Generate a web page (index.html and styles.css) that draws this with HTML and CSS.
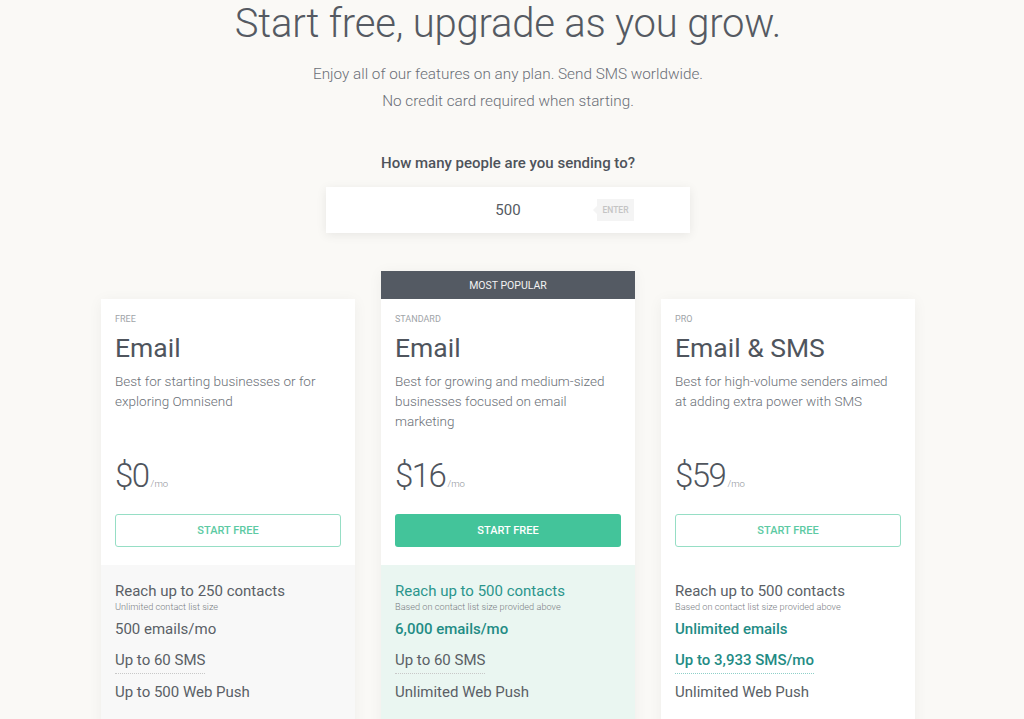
FILE: index.html
```html
<!DOCTYPE html>
<html lang="en">
<head>
  <meta charset="UTF-8">
  <title>Pricing</title>
  <link rel="stylesheet" href="styles.css">
</head>
<body>
  <div class="page">
    <h1 class="title">Start free, upgrade as you grow.</h1>
    <p class="subtitle">Enjoy all of our features on any plan. Send SMS worldwide.<br>No credit card required when starting.</p>

    <div class="contacts">
      <div class="contacts-label">How many people are you sending to?</div>
      <div class="contacts-input">
        <span class="contacts-value">500</span>
        <span class="enter-tag">ENTER</span>
      </div>
    </div>

    <div class="plans">
      <div class="plan">
        <div class="plan-top">
          <div class="plan-tier">FREE</div>
          <div class="plan-name">Email</div>
          <div class="plan-desc">Best for starting businesses or for exploring Omnisend</div>
          <div class="plan-price">$0<span class="per">/mo</span></div>
          <div class="btn btn-outline">START FREE</div>
        </div>
        <div class="plan-features grey">
          <div class="feature">Reach up to 250 contacts<div class="note">Unlimited contact list size</div></div>
          <div class="feature">500 emails/mo</div>
          <div class="feature"><span class="dotted">Up to 60 SMS</span></div>
          <div class="feature">Up to 500 Web Push</div>
        </div>
      </div>

      <div class="plan popular">
        <div class="popular-badge">MOST POPULAR</div>
        <div class="plan-top">
          <div class="plan-tier">STANDARD</div>
          <div class="plan-name">Email</div>
          <div class="plan-desc">Best for growing and medium-sized businesses focused on email marketing</div>
          <div class="plan-price">$16<span class="per">/mo</span></div>
          <div class="btn btn-filled">START FREE</div>
        </div>
        <div class="plan-features mint">
          <div class="feature teal">Reach up to 500 contacts<div class="note">Based on contact list size provided above</div></div>
          <div class="feature teal strong">6,000 emails/mo</div>
          <div class="feature"><span class="dotted">Up to 60 SMS</span></div>
          <div class="feature">Unlimited Web Push</div>
        </div>
      </div>

      <div class="plan">
        <div class="plan-top">
          <div class="plan-tier">PRO</div>
          <div class="plan-name">Email &amp; SMS</div>
          <div class="plan-desc">Best for high-volume senders aimed at adding extra power with SMS</div>
          <div class="plan-price">$59<span class="per">/mo</span></div>
          <div class="btn btn-outline">START FREE</div>
        </div>
        <div class="plan-features">
          <div class="feature">Reach up to 500 contacts<div class="note">Based on contact list size provided above</div></div>
          <div class="feature teal strong">Unlimited emails</div>
          <div class="feature teal strong"><span class="dotted dotted-teal">Up to 3,933 SMS/mo</span></div>
          <div class="feature">Unlimited Web Push</div>
        </div>
      </div>
    </div>
  </div>
</body>
</html>
```

FILE: styles.css
```css
body {
  margin: 0;
  padding: 0;
  background: #faf9f6;
  font-family: Roboto, "Liberation Sans", sans-serif;
  color: #555a62;
  overflow: hidden;
}
.page {
  width: 1016px;
  display: flex;
  flex-direction: column;
  align-items: center;
  padding-top: 2px;
}
.title {
  margin: 0;
  font-size: 40px;
  line-height: 44px;
  font-weight: 300;
  color: #555a62;
  letter-spacing: -0.2px;
}
.subtitle {
  margin: 15px 0 0;
  font-size: 15.3px;
  line-height: 27px;
  font-weight: 300;
  color: #6b6f76;
  text-align: center;
}
.contacts {
  margin-top: 38px;
  display: flex;
  flex-direction: column;
  align-items: center;
}
.contacts-label {
  font-size: 15px;
  line-height: 20px;
  font-weight: 500;
  color: #4e535b;
}
.contacts-input {
  margin-top: 14px;
  width: 364px;
  height: 46px;
  background: #fff;
  box-shadow: 0 2px 10px rgba(0, 0, 0, 0.08);
  display: flex;
  align-items: center;
  justify-content: center;
  position: relative;
}
.contacts-value {
  font-size: 15px;
  color: #555a62;
}
.enter-tag {
  position: absolute;
  left: 271px;
  top: 12px;
  width: 37px;
  height: 22px;
  background: #f4f4f4;
  color: #c4c4c4;
  font-size: 8.5px;
  font-weight: 500;
  display: flex;
  align-items: center;
  justify-content: center;
}
.enter-tag::before {
  content: "";
  position: absolute;
  left: -4px;
  top: 7px;
  border-top: 4px solid transparent;
  border-bottom: 4px solid transparent;
  border-right: 4px solid #f4f4f4;
}
.plans {
  margin-top: 38px;
  display: flex;
  gap: 26px;
  align-items: flex-start;
}
.plan {
  width: 254px;
  background: #fff;
  box-shadow: 0 2px 14px rgba(0, 0, 0, 0.05);
  margin-top: 28px;
}
.plan.popular {
  margin-top: 0;
}
.popular-badge {
  height: 28px;
  background: #545a63;
  color: #f2f2f2;
  font-size: 10.5px;
  font-weight: 400;
  display: flex;
  align-items: center;
  justify-content: center;
}
.plan-top {
  padding: 14px 14px 18px;
}
.plan-tier {
  font-size: 9px;
  line-height: 12px;
  color: #a0a4a8;
}
.plan-name {
  margin-top: 8px;
  font-size: 26.5px;
  line-height: 30px;
  color: #4f555d;
}
.plan-desc {
  margin-top: 8px;
  font-size: 13.5px;
  line-height: 20px;
  font-weight: 300;
  color: #6b7077;
  height: 60px;
}
.plan-price {
  margin-top: 25px;
  font-size: 33px;
  line-height: 40px;
  font-weight: 300;
  color: #4f555d;
  letter-spacing: -1.5px;
}
.per {
  font-size: 9.5px;
  line-height: 1;
  color: #8e9297;
  font-weight: 300;
  letter-spacing: 0;
  margin-left: 2px;
}
.btn {
  margin-top: 18px;
  height: 33px;
  box-sizing: border-box;
  border-radius: 3px;
  display: flex;
  align-items: center;
  justify-content: center;
  font-size: 11px;
  font-weight: 500;
}
.btn-outline {
  border: 1px solid #96dec5;
  color: #5ccaa3;
}
.btn-filled {
  background: #43c49a;
  color: #fff;
}
.plan-features {
  padding: 16px 14px 14px;
  height: 140px;
}
.plan-features.grey {
  background: #f8f8f8;
}
.plan-features.mint {
  background: #eaf6f1;
}
.feature {
  font-size: 15px;
  line-height: 20px;
  color: #5a5f66;
  padding-bottom: 11px;
}
.feature:last-child {
  padding-top: 1px;
}
.note {
  font-size: 9.2px;
  line-height: 11px;
  font-weight: 300;
  color: #7a7e84;
  margin-bottom: -4px;
}
.teal {
  color: #2a958c;
}
.strong {
  font-weight: 500;
  color: #1f8c85;
}
.dotted {
  display: inline-block;
  border-bottom: 1px dotted #c8c8c8;
  padding-bottom: 3px;
  margin-bottom: -4px;
}
.dotted-teal {
  border-bottom-color: #8fd0c9;
}
```
